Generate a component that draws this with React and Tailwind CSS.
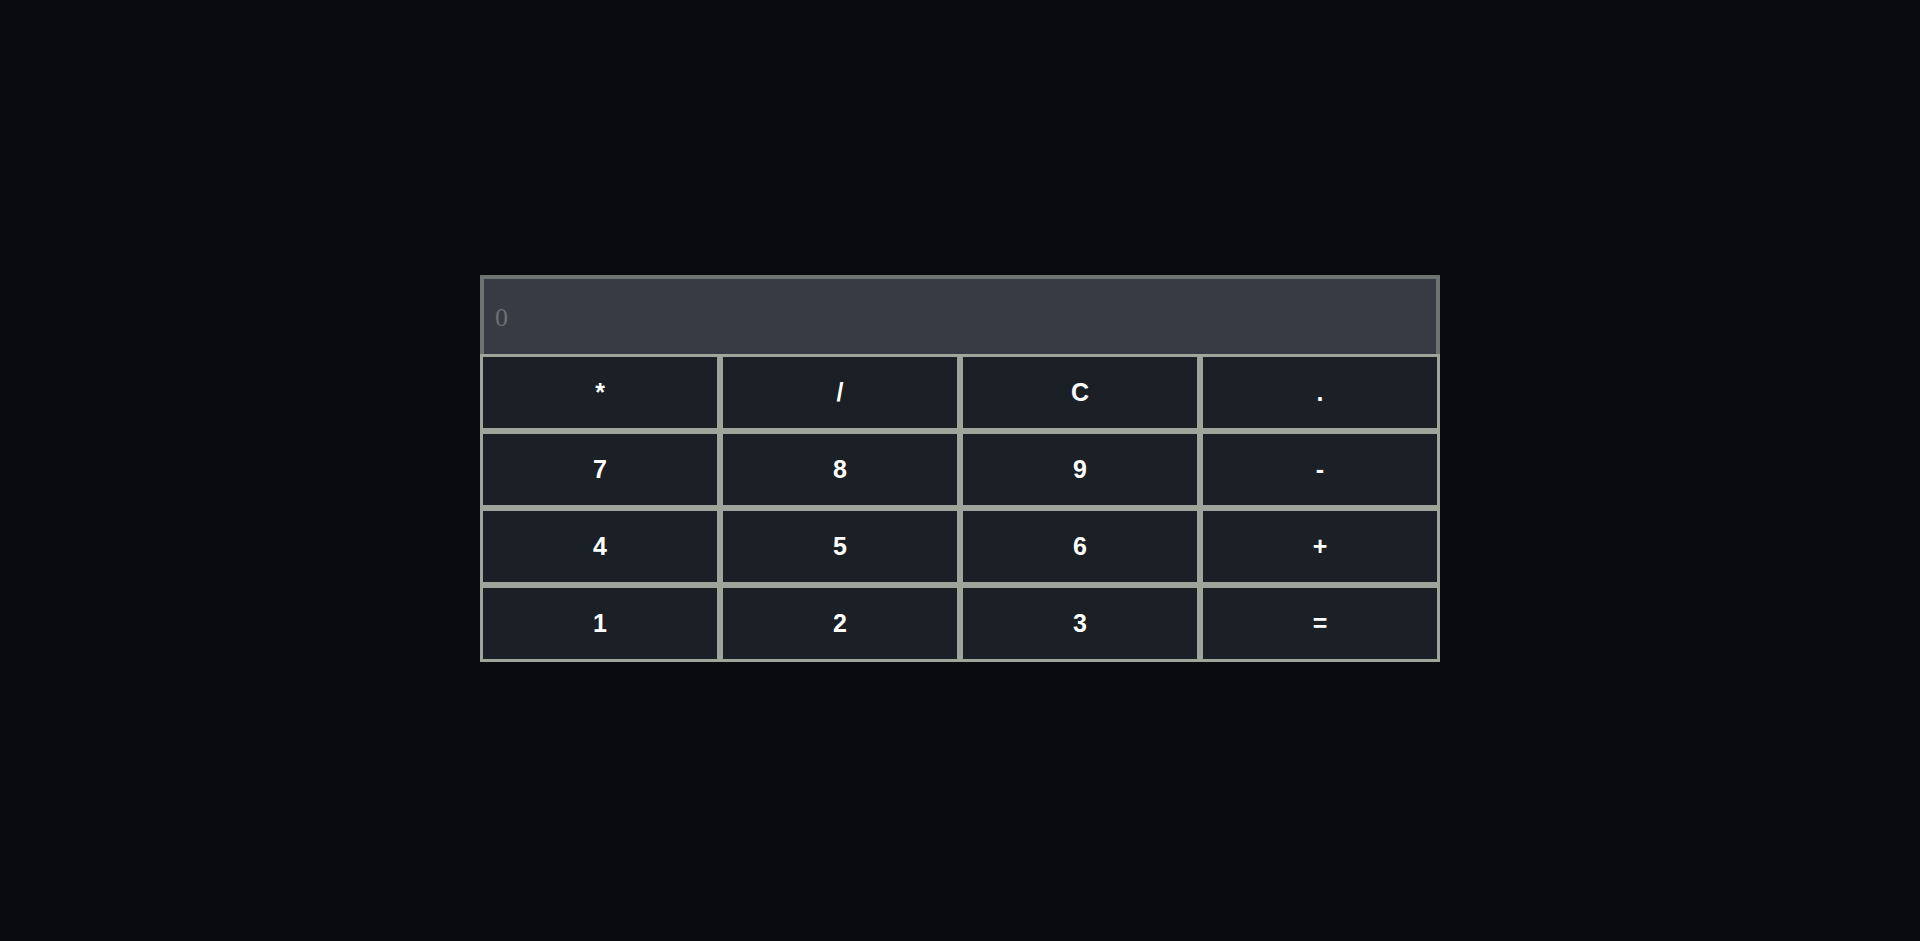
import React, { useState } from "react";

// Calculator keypad, row by row.
const keys = ["*", "/", "C", ".", "7", "8", "9", "-", "4", "5", "6", "+", "1", "2", "3", "="];

const App = () => {
  const [value, setValue] = useState("");

  const handleKey = (k) => {
    if (k === "C") return setValue("");
    if (k === "=") {
      try {
        // eslint-disable-next-line no-new-func
        setValue(String(Function(`return (${value})`)()));
      } catch {
        setValue("");
      }
      return;
    }
    setValue((v) => v + k);
  };

  return (
    <div className="min-h-[941px] w-full bg-[#090b0f] pt-[275px]">
      <div className="mx-auto w-[960px]">
        <input
          value={value}
          onChange={(e) => setValue(e.target.value)}
          placeholder="0"
          className="block h-[79px] w-full border-4 border-b-0 border-[#707471] bg-[#373c44] px-[11px] pt-[2px] text-[26px] text-white outline-none placeholder:text-[#6c7072] font-['Liberation_Serif','Times_New_Roman',serif]"
        />
        <div className="grid grid-cols-4">
          {keys.map((k) => (
            <button
              key={k}
              onClick={() => handleKey(k)}
              className="h-[77px] border-[3px] border-[#a0a59b] bg-[#1b1f26] text-[25px] font-bold text-white font-['Liberation_Sans',Arial,sans-serif]"
            >
              {k}
            </button>
          ))}
        </div>
      </div>
    </div>
  );
};

export default App;
